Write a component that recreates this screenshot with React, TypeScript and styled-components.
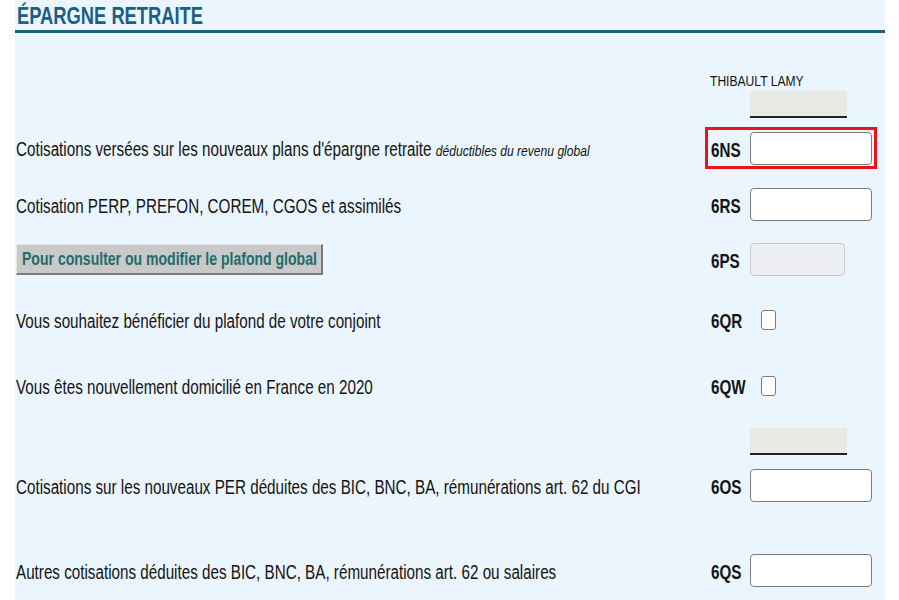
import React from "react";
import styled, { createGlobalStyle } from "styled-components";

const FONT = `"Liberation Sans", Arial, Helvetica, sans-serif`;

const Global = createGlobalStyle`
  html, body { margin: 0; padding: 0; background: #ffffff; }
  body { font-family: ${FONT}; color: #141414; }
  * { box-sizing: border-box; }
`;

const Page = styled.div`
  display: flex;
  padding: 0 14px 0 15px;
  height: 600px;
  overflow: hidden;
`;

const Panel = styled.section`
  flex: 1;
  min-width: 0;
  background: #ebf5fd;
  display: flex;
  flex-direction: column;
`;

/* The reference uses a narrow grotesque; Liberation Sans is condensed horizontally to match it. */
const Narrow = styled.span`
  display: inline-block;
  white-space: nowrap;
  transform: scaleX(0.78);
  transform-origin: left center;
`;

const Title = styled.h2`
  margin: 0;
  height: 35px;
  padding: 2px 0 0 2px;
  font-size: 23.5px;
  line-height: 28px;
  font-weight: 700;
  color: #1b5e86;
  border-bottom: 3px solid #1b5e86;
`;

const Rows = styled.div`
  display: flex;
  flex-direction: column;
  padding: 0 8px 0 1px;
`;

const Row = styled.div<{ $h: number }>`
  display: flex;
  align-items: center;
  height: ${(p) => p.$h}px;
`;

const Label = styled.div`
  flex: 1;
  min-width: 0;
  padding-top: 4px;
  font-size: 19.5px;
  line-height: 22px;
  color: #141414;
`;

const Hint = styled.i`
  font-size: 15.5px;
`;

const Entry = styled.div<{ $hl?: boolean }>`
  flex-shrink: 0;
  width: 172px;
  display: flex;
  align-items: center;
  padding: 2px 2px 1px 3px;
  border: 3px solid ${(p) => (p.$hl ? "#e8141c" : "transparent")};
`;

const Code = styled.span`
  width: 39px;
  flex-shrink: 0;
  padding-top: 3px;
  font-size: 19.5px;
  font-weight: 700;
  color: #141414;
`;

const Field = styled.input<{ $w?: number }>`
  width: ${(p) => p.$w ?? 122}px;
  height: 33px;
  margin: 0;
  border: 1px solid #7c7c7c;
  border-radius: 4px;
  background: #ffffff;
  outline: none;
  &:disabled {
    background: #eeeff3;
    border-color: #c9c9cd;
  }
`;

const Check = styled.input`
  appearance: none;
  margin: 0 0 0 11px;
  width: 15px;
  height: 20px;
  border: 1.5px solid #7a7a7a;
  border-radius: 3px;
  background: #ffffff;
`;

const Head = styled.div<{ $h: number; $pb: number }>`
  height: ${(p) => p.$h}px;
  display: flex;
  flex-direction: column;
  justify-content: flex-end;
  align-items: flex-end;
  padding-bottom: ${(p) => p.$pb}px;
`;

const HeadInner = styled.div`
  width: 172px;
  display: flex;
  flex-direction: column;
`;

const Name = styled.div`
  padding-left: 5px;
  font-size: 15.5px;
  line-height: 18px;
  margin-bottom: 1px;
  color: #141414;
`;

const HeadBox = styled.div`
  margin-left: 45px;
  width: 97px;
  height: 27px;
  background: #e9e9e5;
  border-bottom: 2px solid #222222;
`;

const ButtonCell = styled.div`
  flex: 1;
  min-width: 0;
  display: flex;
`;

const PlafondButton = styled.button`
  width: 307px;
  height: 31px;
  padding: 1px 0 0 5px;
  overflow: hidden;
  text-align: left;
  background: #c9c9c9;
  border-style: solid;
  border-width: 1px 2px 2px 1px;
  border-color: #e6e6e6 #7a7a7a #7a7a7a #e6e6e6;
  font-family: ${FONT};
  font-size: 18px;
  font-weight: 700;
  color: #1f6c6c;
  cursor: pointer;
`;

export default function App() {
  return (
    <>
      <Global />
      <Page>
        <Panel>
          <Title>
            <Narrow>ÉPARGNE RETRAITE</Narrow>
          </Title>
          <Rows>
            <Head $h={93} $pb={8}>
              <HeadInner>
                <Name>
                  <Narrow>THIBAULT LAMY</Narrow>
                </Name>
                <HeadBox />
              </HeadInner>
            </Head>
            <Row $h={44}>
              <Label>
                <Narrow>
                  Cotisations versées sur les nouveaux plans d'épargne retraite{" "}
                  <Hint>déductibles du revenu global</Hint>
                </Narrow>
              </Label>
              <Entry $hl>
                <Code>
                  <Narrow>6NS</Narrow>
                </Code>
                <Field type="text" />
              </Entry>
            </Row>
            <Row $h={68}>
              <Label>
                <Narrow>Cotisation PERP, PREFON, COREM, CGOS et assimilés</Narrow>
              </Label>
              <Entry>
                <Code>
                  <Narrow>6RS</Narrow>
                </Code>
                <Field type="text" />
              </Entry>
            </Row>
            <Row $h={42}>
              <ButtonCell>
                <PlafondButton type="button">
                  <Narrow>Pour consulter ou modifier le plafond global</Narrow>
                </PlafondButton>
              </ButtonCell>
              <Entry>
                <Code>
                  <Narrow>6PS</Narrow>
                </Code>
                <Field type="text" disabled $w={95} />
              </Entry>
            </Row>
            <Row $h={78}>
              <Label>
                <Narrow>Vous souhaitez bénéficier du plafond de votre conjoint</Narrow>
              </Label>
              <Entry>
                <Code>
                  <Narrow>6QR</Narrow>
                </Code>
                <Check type="checkbox" />
              </Entry>
            </Row>
            <Row $h={54}>
              <Label>
                <Narrow>Vous êtes nouvellement domicilié en France en 2020</Narrow>
              </Label>
              <Entry>
                <Code>
                  <Narrow>6QW</Narrow>
                </Code>
                <Check type="checkbox" />
              </Entry>
            </Row>
            <Head $h={48} $pb={5}>
              <HeadInner>
                <HeadBox />
              </HeadInner>
            </Head>
            <Row $h={50}>
              <Label>
                <Narrow>Cotisations sur les nouveaux PER déduites des BIC, BNC, BA, rémunérations art. 62 du CGI</Narrow>
              </Label>
              <Entry>
                <Code>
                  <Narrow>6OS</Narrow>
                </Code>
                <Field type="text" />
              </Entry>
            </Row>
            <Row $h={120}>
              <Label>
                <Narrow>Autres cotisations déduites des BIC, BNC, BA, rémunérations art. 62 ou salaires</Narrow>
              </Label>
              <Entry>
                <Code>
                  <Narrow>6QS</Narrow>
                </Code>
                <Field type="text" />
              </Entry>
            </Row>
          </Rows>
        </Panel>
      </Page>
    </>
  );
}
